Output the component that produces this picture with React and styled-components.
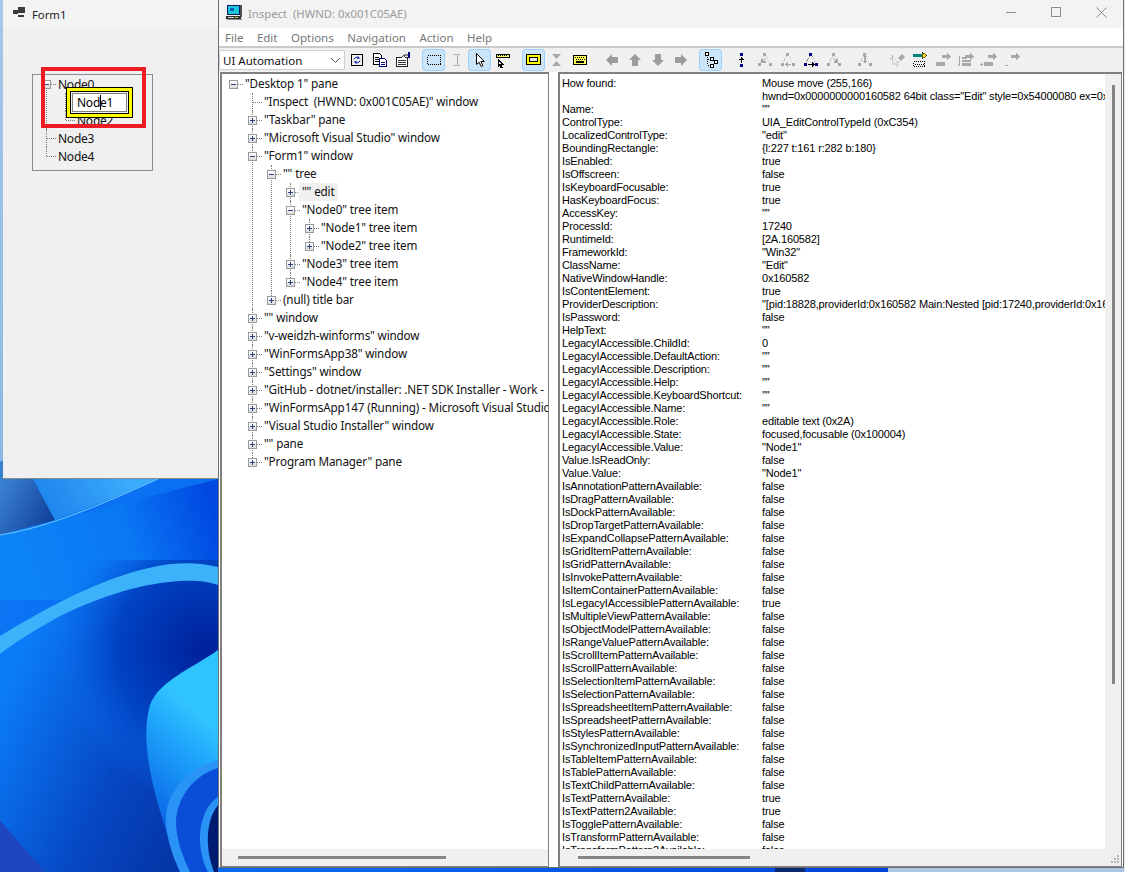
import styled, { createGlobalStyle } from "styled-components"

const GlobalStyle = createGlobalStyle`
  html, body { margin: 0; padding: 0; height: 100%; overflow: hidden; background: #1060e0; }
`

const UI_FONT = `"Noto Sans", "Liberation Sans", sans-serif`

const Desktop = styled.div`
  position: relative;
  width: 1125px;
  height: 872px;
  overflow: hidden;
  display: grid;
  grid-template-columns: 215px 906px;
  align-items: start;
  padding-left: 3px;
  box-sizing: border-box;
  font-family: ${UI_FONT};
`
const Backdrop = styled.svg`
  position: absolute;
  left: 0;
  top: 0;
`
const FormWindow = styled.div`
  position: relative;
  height: 479px;
  box-sizing: border-box;
  background: #f0f0f0;
  border-bottom: 1px solid #8a8a8a;
`
const TitleBar = styled.div`
  height: 28px;
  background: #f3f3f3;
  display: flex;
  align-items: center;
  color: ${p => p.$dim ? "#9a9a9a" : "#222"};
  font-size: 11.3px;
  padding-left: ${p => p.$pad}px;
`
const TitleText = styled.span`
  margin-left: ${p => p.$gap}px;
  margin-bottom: ${p => p.$lift || 0}px;
  white-space: pre;
`
const TitleGlyph = styled.span`
  display: flex;
  margin-bottom: 4px;
`
const FormTree = styled.div`
  width: 121px;
  height: 97px;
  margin: 46px 0 0 29px;
  box-sizing: border-box;
  border: 1px solid #8b8b98;
  padding-left: 8px;
  overflow: hidden;
`
const Annotation = styled.div`
  position: absolute;
  left: ${p => p.$x}px;
  top: ${p => p.$y}px;
  width: ${p => p.$w}px;
  height: ${p => p.$h}px;
  box-sizing: border-box;
  border: ${p => p.$t}px solid #ed1c24;
  z-index: 5;
`
const Highlight = styled.div`
  position: absolute;
  left: 63px;
  top: 87px;
  width: 67px;
  height: 31px;
  box-sizing: border-box;
  border: 1px solid #000;
  background: #ffff00;
  padding: 3px;
  z-index: 4;
`
const HighlightInner = styled.div`
  height: 100%;
  box-sizing: border-box;
  border: 1px solid #000;
  background: #f0f0f0;
  padding: 1px;
`
const EditBox = styled.div`
  position: relative;
  height: 100%;
  box-sizing: border-box;
  border: 1px solid #808080;
  background: #fff;
  font-size: 12px;
  line-height: 17px;
  padding-left: 4px;
  letter-spacing: -0.25px;
  color: #000;
`
const Caret = styled.span`
  position: absolute;
  left: 27px;
  top: 1px;
  width: 1px;
  height: 15px;
  background: #000;
`

const InspectWindow = styled.div`
  position: relative;
  height: 868px;
  box-sizing: border-box;
  background: #fff;
  border: solid #6f6f6f;
  border-width: 0 1px 1px 1px;
  display: flex;
  flex-direction: column;
`
const WindowControls = styled.div`
  margin-left: auto;
  margin-right: -1px;
  align-self: flex-start;
  display: flex;
  align-items: center;
`
const ControlBtn = styled.div`
  width: 45px;
  height: 25px;
  display: flex;
  align-items: center;
  justify-content: center;
`
const MenuBar = styled.div`
  height: 18px;
  display: flex;
  align-items: center;
  padding-left: 6px;
  gap: 13.5px;
  font-size: 11.5px;
  color: #777;
  background: #fff;
`
const Toolbar = styled.div`
  box-sizing: border-box;
  border-top: 2px solid #c9c9c9;
  height: 26px;
  background: #f0f0f0;
  display: flex;
  align-items: center;
`
const Combo = styled.div`
  width: 126px;
  height: 20px;
  box-sizing: border-box;
  border: 1px solid #d0d0d0;
  border-radius: 2px;
  background: #fff;
  display: flex;
  align-items: center;
  justify-content: space-between;
  padding: 0 3px;
  font-size: 11.5px;
  color: #111;
`
const ToolBtn = styled.div`
  width: 23px;
  height: 22px;
  box-sizing: border-box;
  margin-left: ${p => p.$gap || 0}px;
  display: flex;
  align-items: center;
  justify-content: center;
  border-radius: 3px;
  border: 1px solid ${p => p.$on ? "#99d1ff" : "transparent"};
  background: ${p => p.$on ? "#cce4f7" : "transparent"};
`
const Panes = styled.div`
  flex: 1;
  min-height: 0;
  display: grid;
  grid-template-columns: 329px 564px;
  column-gap: 9px;
  padding-left: 1px;
`
const Pane = styled.div`
  display: flex;
  flex-direction: column;
  min-width: 0;
  min-height: 0;
  box-sizing: border-box;
  border: solid #808080;
  border-width: 2px 1px 1px 2px;
  overflow: hidden;
`
const PaneBody = styled.div`
  flex: 1;
  min-height: 0;
  display: flex;
  background: #fff;
`
const TreeScroll = styled.div`
  flex: 1;
  min-width: 0;
  overflow: hidden;
  padding: 1px 0 0 6px;
`
const HScroll = styled.div`
  height: 17px;
  flex: none;
  box-sizing: border-box;
  background: #f0f0f0;
  display: flex;
  align-items: flex-start;
  padding-left: ${p => p.$start}px;
`
const HThumb = styled.div`
  width: ${p => p.$w}px;
  height: 3px;
  margin-top: 7px;
  background: #858585;
`
const Grip = styled.svg`
  margin-left: auto;
  margin-top: 5px;
  margin-right: 1px;
`
const VScroll = styled.div`
  width: 16px;
  flex: none;
  background: #f0f0f0;
  display: flex;
  flex-direction: column;
  align-items: center;
  padding-top: 11px;
  box-sizing: border-box;
`
const VThumb = styled.div`
  width: 3px;
  height: 599px;
  background: #858585;
  margin-left: 1px;
`

const Branch = styled.ul`
  list-style: none;
  margin: 0;
  padding: 0 0 0 ${p => p.$root ? 0 : 19}px;
`
const Item = styled.li`
  position: relative;
  &::before {
    content: "";
    position: absolute;
    left: 5px;
    top: ${p => p.$rootFirst ? 9 : 0}px;
    height: ${p => p.$last ? (p.$rootFirst ? "0px" : "9px") : (p.$rootFirst ? "calc(100% - 9px)" : "100%")};
    border-left: 1px dotted #7d7d7d;
  }
`
const Row = styled.div`
  position: relative;
  height: 18px;
  display: flex;
  align-items: center;
  padding-left: 1px;
  white-space: pre;
  &::after {
    content: "";
    position: absolute;
    left: 6px;
    top: 9px;
    width: 9px;
    border-top: 1px dotted #7d7d7d;
  }
`
const Expander = styled.span`
  position: relative;
  z-index: 1;
  flex: none;
  width: 9px;
  height: 9px;
  box-sizing: border-box;
  margin-right: 4px;
  border: 1px solid ${p => p.$state ? "#9a9a9a" : "transparent"};
  background: ${p => p.$state ? "linear-gradient(#fff, #dcdcdc)" : "transparent"};
  &::before {
    content: "";
    display: ${p => p.$state ? "block" : "none"};
    position: absolute;
    left: 1px;
    top: 3px;
    width: 5px;
    height: 1px;
    background: #2f3f7f;
  }
  &::after {
    content: "";
    display: ${p => p.$state === "closed" ? "block" : "none"};
    position: absolute;
    left: 3px;
    top: 1px;
    width: 1px;
    height: 5px;
    background: #2f3f7f;
  }
`
const Label = styled.span`
  position: relative;
  z-index: 1;
  height: 18px;
  line-height: ${p => p.$compact ? 20 : 16}px;
  padding: 0 3px;
  font-size: ${p => p.$compact ? 12 : 11.7}px;
  letter-spacing: ${p => p.$compact ? -0.25 : -0.15}px;
  color: #111;
  background: ${p => p.$hot ? "#f0f0f0" : "transparent"};
`

const List = styled.div`
  flex: 1;
  min-width: 0;
  overflow: hidden;
  padding: 3px 0 0 2px;
  font-family: "Liberation Sans", Arial, sans-serif;
  font-size: 11px;
  letter-spacing: -0.15px;
  color: #000;
`
const PropRow = styled.div`
  display: grid;
  grid-template-columns: 200px 1fr;
  height: 13px;
  line-height: 13px;
  white-space: pre;
`
const PropValue = styled.span`
  overflow: hidden;
`

const Ico = ({ w = 16, h = 16, children, crisp }) => (
  <svg width={w} height={h} viewBox={`0 0 ${w} ${h}`} shapeRendering={crisp ? "crispEdges" : undefined} fill="none">
    {children}
  </svg>
)

const FormIcon = () => (
  <Ico w={13} h={11} crisp>
    <rect x="5" y="0" width="7" height="6" fill="#3c3c3c" />
    <rect x="0" y="3" width="5" height="4" fill="#3c3c3c" />
    <rect x="5" y="8" width="6" height="2" fill="#3c3c3c" />
  </Ico>
)
const InspectIcon = () => (
  <Ico w={17} h={17} crisp>
    <rect x="1" y="1" width="13" height="10" fill="#101860" />
    <rect x="2" y="2" width="11" height="8" fill="#18c8d8" />
    <rect x="4" y="4" width="4" height="3" fill="#0060c0" />
    <rect x="14" y="1" width="2" height="12" fill="#505050" />
    <rect x="0" y="12" width="15" height="3" fill="#303030" />
    <rect x="2" y="13" width="6" height="1" fill="#d8d8d8" />
    <rect x="9" y="13" width="3" height="1" fill="#e0d040" />
    <rect x="1" y="15" width="15" height="1" fill="#888" />
  </Ico>
)
const Chevron = () => (
  <Ico w={11} h={7}>
    <path d="M1 1l4.5 4.5L10 1" stroke="#555" />
  </Ico>
)
const RefreshIcon = () => (
  <Ico>
    <rect x="2.5" y="2.5" width="11" height="11" stroke="#000" />
    <path d="M5 7.5a3 3 0 0 1 5-1.5M11 8.5a3 3 0 0 1-5 1.5" stroke="#1020a0" />
    <path d="M9 4l2 2.5-3 .5zM7 12l-2-2.5 3-.5z" fill="#1020a0" />
  </Ico>
)
const CopyIcon = () => (
  <Ico crisp>
    <path d="M1.5 1.5h6l2 2v9h-8z" fill="#fff" stroke="#000" />
    <path d="M3 5h4M3 7h4M3 9h4" stroke="#000" />
    <path d="M7.5 6.5h5l2 2v6h-7z" fill="#fff" stroke="#000080" />
    <path d="M9 10h4M9 12h4" stroke="#000080" />
  </Ico>
)
const PropsIcon = () => (
  <Ico crisp>
    <path d="M1.5 5.5h5l2-2 2 2h2v9h-11z" fill="#fff" stroke="#222" />
    <path d="M3 8h8M3 10h8M3 12h8" stroke="#333" />
    <rect x="13" y="0" width="2" height="6" fill="#000080" />
    <path d="M9 2h4v2H9z" fill="#888" />
  </Ico>
)
const DottedRectIcon = () => (
  <Ico crisp>
    <rect x="1.5" y="3.5" width="13" height="9" stroke="#000" strokeDasharray="1 1" />
  </Ico>
)
const BeamIcon = () => (
  <Ico crisp>
    <path d="M5 2.5h2.5M8.5 2.5H11M8 3v10M5 13.5h2.5M8.5 13.5H11" stroke="#a8a8a8" />
  </Ico>
)
const CursorIcon = () => (
  <Ico>
    <path d="M4.5 1.5v11l2.6-2.3 2 4.3 1.8-.8-2-4.2h3.4z" fill="#fff" stroke="#000" />
  </Ico>
)
const TipCursorIcon = () => (
  <Ico crisp>
    <rect x="1" y="2" width="14" height="4" fill="#000" />
    <rect x="2" y="3" width="12" height="2" fill="#ffff60" />
    {[3, 5, 7, 9, 11].map(x => <rect key={x} x={x} y="3" width="1" height="1" fill="#000" />)}
    <path d="M3 7.5v7l1.5-1.5 1.5 3 1-.5-1.5-3H8z" fill="#fff" stroke="#000" />
  </Ico>
)
const FrameIcon = () => (
  <Ico w={16} h={14} crisp>
    <rect x="0" y="1" width="15" height="11" fill="#000" />
    <rect x="1" y="2" width="13" height="9" fill="#ffff00" />
    <rect x="3.5" y="4.5" width="8" height="4" fill="#e8e8e8" stroke="#000" />
  </Ico>
)
const CollapseIcon = () => (
  <Ico w={12} h={16}>
    <path d="M1 2h9L5.5 7zM5.5 9L10 14H1z" fill="#a8a8a8" />
  </Ico>
)
const KeyboardIcon = () => (
  <Ico w={14} h={10} crisp>
    <rect x="0" y="0" width="14" height="10" fill="#000" />
    <rect x="1" y="1" width="12" height="8" fill="#ffff60" />
    {[2, 4, 6, 8, 10].map(x => <rect key={x} x={x} y="2" width="1" height="1" fill="#000" />)}
    {[3, 5, 7, 9, 11].map(x => <rect key={x} x={x} y="4" width="1" height="1" fill="#000" />)}
    <rect x="3" y="6" width="8" height="2" fill="#000" />
  </Ico>
)
const arrowPaths = {
  left: "M6 0v3h6v6H6v3L0 6z",
  up: "M6 0l6 6H9v6H3V6H0z",
  down: "M3 0h6v6h3l-6 6-6-6h3z",
  right: "M6 0l6 6-6 6V9H0V3h6z",
}
const ArrowIcon = ({ to }) => (
  <Ico w={12} h={12}>
    <path d={arrowPaths[to]} fill="#9c9c9c" />
  </Ico>
)
const TreeIcon = () => (
  <Ico w={14} h={18} crisp>
    <path d="M3.5 4v10h5M3.5 8h5" stroke="#000" strokeDasharray="1 1" />
    <rect x="1.5" y="1.5" width="3" height="3" fill="#fff" stroke="#000" />
    <rect x="6.5" y="6.5" width="3" height="3" fill="#fff" stroke="#000" />
    <rect x="10.5" y="9.5" width="3" height="3" fill="#fff" stroke="#000" />
    <rect x="6.5" y="13.5" width="3" height="3" fill="#fff" stroke="#000" />
  </Ico>
)
const ParentIcon = () => (
  <Ico w={7} h={14} crisp>
    <rect x="2" y="0" width="3" height="3" fill="#000080" />
    <rect x="2" y="11" width="3" height="3" fill="#000080" />
    <path d="M3.5 4v6M1 6h5M2.5 5h2" stroke="#000" />
  </Ico>
)
const NavTriangle = ({ arrow, on }) => {
  const node = on ? "#000080" : "#a8a8a8"
  const ink = on ? "#000" : "#a8a8a8"
  return (
    <Ico w={14} h={14} crisp>
      <rect x="5" y="0" width="3" height="3" fill={node} />
      <rect x="0" y="10" width="3" height="3" fill={node} />
      <rect x="11" y="10" width="3" height="3" fill={node} />
      <path d="M5.5 3L2 10M8 3l3.5 7" stroke={on ? "#888" : "#c0c0c0"} strokeDasharray="1 1" />
      <path d={arrow} stroke={ink} strokeWidth="1.2" />
    </Ico>
  )
}
const SmartIcon = () => (
  <Ico w={16} h={16}>
    <path d="M3 5l1 8 2-2 2 4 1-1-2-3.5h3z" stroke="#a8a8a8" strokeDasharray="1 1" />
    <path d="M9 6l4-4 3 3-4 4z" fill="#a8a8a8" />
    <path d="M2 3l2 2M1 7h2" stroke="#a8a8a8" />
  </Ico>
)
const GoIcon = () => (
  <Ico w={16} h={16} crisp>
    <rect x="1" y="2" width="9" height="3" fill="#007f7f" />
    <path d="M10 0l5 3.5-5 3.5z" fill="#ffe020" stroke="#000" strokeWidth="0.6" />
    <rect x="1.5" y="9.5" width="11" height="5" stroke="#000" strokeDasharray="1 1" />
    <path d="M3 12h9" stroke="#000" strokeDasharray="1 1" />
  </Ico>
)
const BarArrow = ({ pre, bars }) => (
  <Ico w={18} h={14} crisp>
    {bars.map(b => <rect key={b.y} x={b.x} y={b.y} width={b.w} height={b.h} fill="#a8a8a8" />)}
    <path d="M8 2h5V0l4 3.5L13 7V5H8z" fill="#a8a8a8" />
    {pre && <path d={pre} stroke="#a8a8a8" />}
  </Ico>
)

const Tree = ({ nodes, root, compact }) => (
  <Branch $root={root}>
    {nodes.map((n, i) => (
      <Item key={n.label + i} $last={i === nodes.length - 1} $rootFirst={root && i === 0}>
        <Row>
          <Expander $state={n.state} />
          <Label $hot={n.hot} $compact={compact}>{n.label}</Label>
        </Row>
        {n.kids && <Tree nodes={n.kids} compact={compact} />}
      </Item>
    ))}
  </Branch>
)

const formNodes = [
  {
    label: "Node0", state: "open", kids: [
      { label: "Node1" },
      { label: "Node2" },
    ],
  },
  { label: "Node3" },
  { label: "Node4" },
]

const c = "closed"
const inspectNodes = [
  {
    label: `"Desktop 1" pane`, state: "open", kids: [
      { label: `"Inspect  (HWND: 0x001C05AE)" window` },
      { label: `"Taskbar" pane`, state: c },
      { label: `"Microsoft Visual Studio" window`, state: c },
      {
        label: `"Form1" window`, state: "open", kids: [
          {
            label: `"" tree`, state: "open", kids: [
              { label: `"" edit`, state: c, hot: true },
              {
                label: `"Node0" tree item`, state: "open", kids: [
                  { label: `"Node1" tree item`, state: c },
                  { label: `"Node2" tree item`, state: c },
                ],
              },
              { label: `"Node3" tree item`, state: c },
              { label: `"Node4" tree item`, state: c },
            ],
          },
          { label: `(null) title bar`, state: c },
        ],
      },
      { label: `"" window`, state: c },
      { label: `"v-weidzh-winforms" window`, state: c },
      { label: `"WinFormsApp38" window`, state: c },
      { label: `"Settings" window`, state: c },
      { label: `"GitHub - dotnet/installer: .NET SDK Installer - Work -`, state: c },
      { label: `"WinFormsApp147 (Running) - Microsoft Visual Studio`, state: c },
      { label: `"Visual Studio Installer" window`, state: c },
      { label: `"" pane`, state: c },
      { label: `"Program Manager" pane`, state: c },
    ],
  },
]

const patterns = [
  ["Annotation", "false"], ["Drag", "false"], ["Dock", "false"], ["DropTarget", "false"],
  ["ExpandCollapse", "false"], ["GridItem", "false"], ["Grid", "false"], ["Invoke", "false"],
  ["ItemContainer", "false"], ["LegacyIAccessible", "true"], ["MultipleView", "false"],
  ["ObjectModel", "false"], ["RangeValue", "false"], ["ScrollItem", "false"], ["Scroll", "false"],
  ["SelectionItem", "false"], ["Selection", "false"], ["SpreadsheetItem", "false"],
  ["Spreadsheet", "false"], ["Styles", "false"], ["SynchronizedInput", "false"], ["TableItem", "false"],
  ["Table", "false"], ["TextChild", "false"], ["Text", "true"], ["Text", "true", "2"], ["Toggle", "false"],
  ["Transform", "false"], ["Transform", "false", "2"],
].map(([n, v, s]) => [`Is${n}Pattern${s || ""}Available:`, v])

const props = [
  ["How found:", "Mouse move (255,166)"],
  ["", `hwnd=0x0000000000160582 64bit class="Edit" style=0x54000080 ex=0x`],
  ["Name:", `""`],
  ["ControlType:", "UIA_EditControlTypeId (0xC354)"],
  ["LocalizedControlType:", `"edit"`],
  ["BoundingRectangle:", "{l:227 t:161 r:282 b:180}"],
  ["IsEnabled:", "true"],
  ["IsOffscreen:", "false"],
  ["IsKeyboardFocusable:", "true"],
  ["HasKeyboardFocus:", "true"],
  ["AccessKey:", `""`],
  ["ProcessId:", "17240"],
  ["RuntimeId:", "[2A.160582]"],
  ["FrameworkId:", `"Win32"`],
  ["ClassName:", `"Edit"`],
  ["NativeWindowHandle:", "0x160582"],
  ["IsContentElement:", "true"],
  ["ProviderDescription:", `"[pid:18828,providerId:0x160582 Main:Nested [pid:17240,providerId:0x16`],
  ["IsPassword:", "false"],
  ["HelpText:", `""`],
  ["LegacyIAccessible.ChildId:", "0"],
  ["LegacyIAccessible.DefaultAction:", `""`],
  ["LegacyIAccessible.Description:", `""`],
  ["LegacyIAccessible.Help:", `""`],
  ["LegacyIAccessible.KeyboardShortcut:", `""`],
  ["LegacyIAccessible.Name:", `""`],
  ["LegacyIAccessible.Role:", "editable text (0x2A)"],
  ["LegacyIAccessible.State:", "focused,focusable (0x100004)"],
  ["LegacyIAccessible.Value:", `"Node1"`],
  ["Value.IsReadOnly:", "false"],
  ["Value.Value:", `"Node1"`],
  ...patterns,
]

const Wallpaper = () => (
  <Backdrop width="1125" height="872" viewBox="0 0 1125 872">
    <defs>
      <linearGradient id="base" x1="0" y1="0" x2="1" y2="0.35">
        <stop offset="0" stopColor="#0a7cf6" />
        <stop offset="0.6" stopColor="#0a66ee" />
        <stop offset="1" stopColor="#0044d8" />
      </linearGradient>
      <linearGradient id="band" gradientUnits="userSpaceOnUse" x1="0" y1="590" x2="218" y2="520">
        <stop offset="0" stopColor="#0c86f6" />
        <stop offset="0.6" stopColor="#0a78f4" />
        <stop offset="1" stopColor="#0048e0" />
      </linearGradient>
      <radialGradient id="deep" gradientUnits="userSpaceOnUse" cx="205" cy="650" r="150">
        <stop offset="0" stopColor="#00209a" />
        <stop offset="0.6" stopColor="#0044c4" />
        <stop offset="1" stopColor="#0a6cf0" stopOpacity="0" />
      </radialGradient>
      <linearGradient id="lower" gradientUnits="userSpaceOnUse" x1="0" y1="700" x2="200" y2="790">
        <stop offset="0" stopColor="#0b7cf8" />
        <stop offset="0.6" stopColor="#0648c4" />
        <stop offset="1" stopColor="#0536a8" />
      </linearGradient>
      <linearGradient id="swirl" gradientUnits="userSpaceOnUse" x1="150" y1="810" x2="218" y2="730">
        <stop offset="0" stopColor="#0a68e8" />
        <stop offset="0.7" stopColor="#20a8fc" />
        <stop offset="1" stopColor="#30c4ff" />
      </linearGradient>
      <linearGradient id="cone" gradientUnits="userSpaceOnUse" x1="40" y1="520" x2="120" y2="470">
        <stop offset="0" stopColor="#1a80ec" />
        <stop offset="1" stopColor="#3aaafa" />
      </linearGradient>
      <linearGradient id="shade" gradientUnits="userSpaceOnUse" x1="0" y1="490" x2="55" y2="520">
        <stop offset="0" stopColor="#3a80d0" />
        <stop offset="1" stopColor="#0e3e98" />
      </linearGradient>
      <linearGradient id="top" x1="0" y1="0" x2="0" y2="1">
        <stop offset="0" stopColor="#a6c8e8" />
        <stop offset="1" stopColor="#8ab8e4" />
      </linearGradient>
    </defs>
    <rect width="1125" height="872" fill="url(#base)" />
    <path d="M0 535L218 479V600H0z" fill="url(#band)" />
    <rect x="0" y="0" width="3" height="462" fill="url(#top)" />
    <path d="M0 462L3 460V479H33L55 520C35 526 15 530 0 535z" fill="url(#shade)" />
    <path d="M33 479H158C120 495 85 510 55 520z" fill="url(#cone)" />
    <path d="M0 535C50 527 100 505 158 479" stroke="#6cc8fc" strokeWidth="1" fill="none" />
    <path d="M0 640V872H218V570C160 560 80 600 0 640z" fill="url(#lower)" />
    <rect x="40" y="560" width="180" height="240" fill="url(#deep)" />
    <path d="M0 636C50 606 110 572 170 564C190 562 205 564 218 567V585C190 575 130 582 60 616C35 630 15 642 0 654z" fill="#3cb2fb" />
    <path d="M218 650C190 670 160 680 150 705C140 740 150 790 181 872H218z" fill="url(#swirl)" />
    <path d="M218 760C190 768 168 790 166 815C165 835 172 855 180 872H218z" fill="#2a94f6" />
    <path d="M218 768C195 775 178 795 176 820C176 840 182 855 190 872H218z" fill="#0a4ed8" />
    <path d="M218 797C205 805 199 825 200 842C201 855 204 865 208 872H218z" fill="#2a94f6" />
    <path d="M218 805C210 815 207 830 208 845C209 858 212 866 214 872H218z" fill="#001c70" />
    <path d="M0 820C15 838 30 855 45 872H0z" fill="#1f46c0" />
    <rect x="888" y="860" width="237" height="12" fill="#aac6e2" />
    <rect x="775" y="868" width="30" height="4" fill="#0a2a70" />
    <rect x="1124" y="0" width="1" height="872" fill="#dce8f4" />
  </Backdrop>
)

export default function App() {
  return (
    <>
      <GlobalStyle />
      <Desktop>
        <Wallpaper />
        <FormWindow>
          <TitleBar $pad={10}>
            <TitleGlyph><FormIcon /></TitleGlyph>
            <TitleText $gap={6}>Form1</TitleText>
          </TitleBar>
          <FormTree>
            <Tree nodes={formNodes} root compact />
          </FormTree>
          <Highlight>
            <HighlightInner>
              <EditBox>
                Node1
                <Caret />
              </EditBox>
            </HighlightInner>
          </Highlight>
          <Annotation $x={38} $y={67} $w={105} $h={61} $t={4} />
        </FormWindow>

        <InspectWindow>
          <TitleBar $pad={7} $dim>
            <TitleGlyph><InspectIcon /></TitleGlyph>
            <TitleText $gap={5} $lift={2}>{"Inspect  (HWND: 0x001C05AE)"}</TitleText>
            <WindowControls>
              <ControlBtn>
                <Ico w={11} h={11} crisp><path d="M0 5.5h10" stroke="#8c8c8c" /></Ico>
              </ControlBtn>
              <ControlBtn>
                <Ico w={11} h={11} crisp><rect x="0.5" y="0.5" width="9" height="9" stroke="#8c8c8c" /></Ico>
              </ControlBtn>
              <ControlBtn>
                <Ico w={11} h={11}><path d="M.5 .5l10 10M10.5 .5l-10 10" stroke="#8c8c8c" /></Ico>
              </ControlBtn>
            </WindowControls>
          </TitleBar>
          <MenuBar>
            <span>File</span>
            <span>Edit</span>
            <span>Options</span>
            <span>Navigation</span>
            <span>Action</span>
            <span>Help</span>
          </MenuBar>
          <Toolbar>
            <Combo>UI Automation<Chevron /></Combo>
            <ToolBtn><RefreshIcon /></ToolBtn>
            <ToolBtn><CopyIcon /></ToolBtn>
            <ToolBtn><PropsIcon /></ToolBtn>
            <ToolBtn $gap={8} $on><DottedRectIcon /></ToolBtn>
            <ToolBtn><BeamIcon /></ToolBtn>
            <ToolBtn $on><CursorIcon /></ToolBtn>
            <ToolBtn><TipCursorIcon /></ToolBtn>
            <ToolBtn $gap={8} $on><FrameIcon /></ToolBtn>
            <ToolBtn><CollapseIcon /></ToolBtn>
            <ToolBtn><KeyboardIcon /></ToolBtn>
            <ToolBtn $gap={9}><ArrowIcon to="left" /></ToolBtn>
            <ToolBtn><ArrowIcon to="up" /></ToolBtn>
            <ToolBtn><ArrowIcon to="down" /></ToolBtn>
            <ToolBtn><ArrowIcon to="right" /></ToolBtn>
            <ToolBtn $gap={7} $on><TreeIcon /></ToolBtn>
            <ToolBtn $gap={8}><ParentIcon /></ToolBtn>
            <ToolBtn><NavTriangle arrow="M8 5L4 9M4 5.5V9H7.5" /></ToolBtn>
            <ToolBtn><NavTriangle arrow="M10 11.5H5M7 9.5L5 11.5l2 2" /></ToolBtn>
            <ToolBtn><NavTriangle on arrow="M3.5 11.5h6.5M8 9.5l2 2-2 2" /></ToolBtn>
            <ToolBtn><NavTriangle arrow="M6 5l4 4M10 5.5V9H6.5" /></ToolBtn>
            <ToolBtn $gap={8}><NavTriangle arrow="M7 3v7M5 8l2 2 2-2" /></ToolBtn>
            <ToolBtn $gap={9}><SmartIcon /></ToolBtn>
            <ToolBtn><GoIcon /></ToolBtn>
            <ToolBtn><BarArrow bars={[{ x: 2, y: 9, w: 9, h: 4 }]} /></ToolBtn>
            <ToolBtn><BarArrow bars={[{ x: 5, y: 4, w: 5, h: 2 }, { x: 5, y: 7, w: 9, h: 2 }, { x: 5, y: 10, w: 9, h: 3 }]} pre="M2 3v10M1 11.5h2" /></ToolBtn>
            <ToolBtn><BarArrow bars={[{ x: 4, y: 9, w: 9, h: 4 }]} pre="M0 11h3M1.5 9.5v3" /></ToolBtn>
            <ToolBtn><BarArrow bars={[]} pre="M2 12h3" /></ToolBtn>
          </Toolbar>
          <Panes>
            <Pane>
              <PaneBody>
                <TreeScroll>
                  <Tree nodes={inspectNodes} root />
                </TreeScroll>
              </PaneBody>
              <HScroll $start={16}><HThumb $w={208} /></HScroll>
            </Pane>
            <Pane>
              <PaneBody>
                <List>
                  {props.map(([k, v], i) => (
                    <PropRow key={i}>
                      <span>{k}</span>
                      <PropValue>{v}</PropValue>
                    </PropRow>
                  ))}
                </List>
                <VScroll><VThumb /></VScroll>
              </PaneBody>
              <HScroll $start={18}>
                <HThumb $w={172} />
                <Grip width="10" height="10" viewBox="0 0 10 10" shapeRendering="crispEdges">
                  <path d="M7 1h2v2H7zM4 4h2v2H4zM7 4h2v2H7zM1 7h2v2H1zM4 7h2v2H4zM7 7h2v2H7z" fill="#b4b4b4" />
                </Grip>
              </HScroll>
            </Pane>
          </Panes>
        </InspectWindow>
      </Desktop>
    </>
  )
}
